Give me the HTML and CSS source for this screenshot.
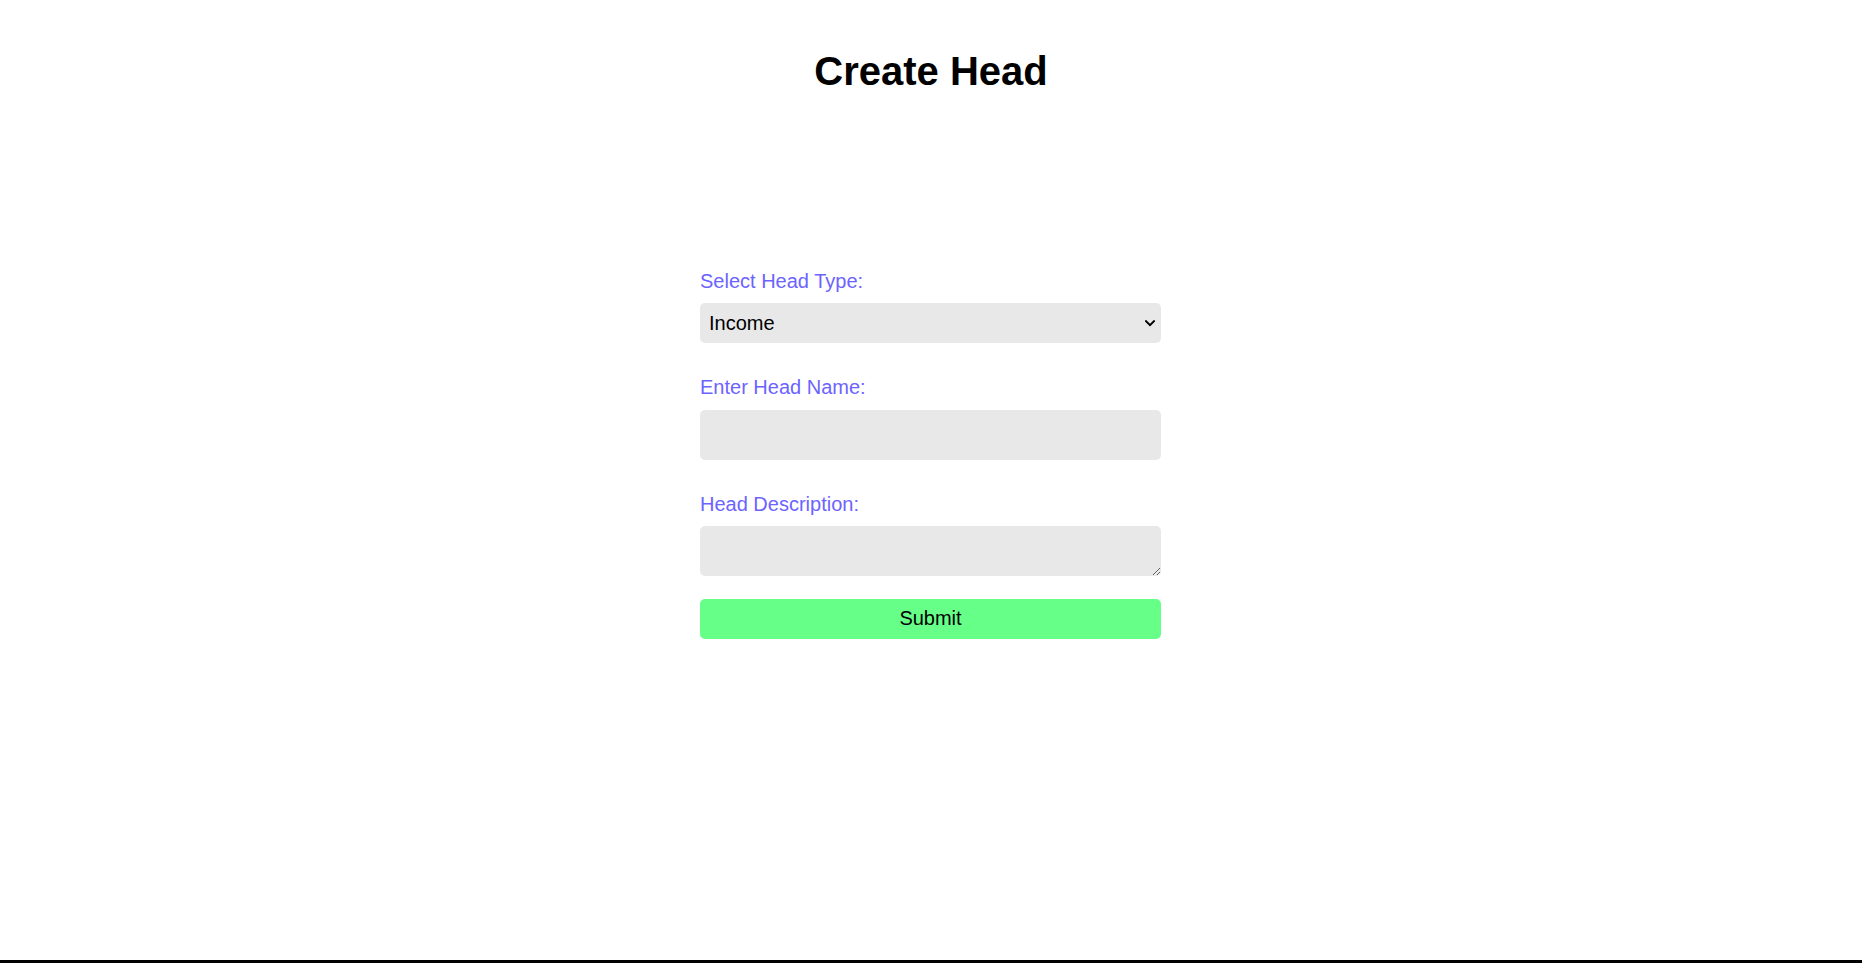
FILE: index.html
```html
<!DOCTYPE html>
<html lang="en">
<head>
<meta charset="utf-8">
<title>Create Head</title>
<link rel="stylesheet" href="styles.css">
</head>
<body>
<main class="page">
  <h1 class="title">Create Head</h1>
  <form class="head-form">
    <div class="field">
      <label class="field-label" for="type">Select Head Type:</label>
      <div class="select-wrap">
        <select id="type" class="control control-select">
          <option>Income</option>
          <option>Expense</option>
        </select>
        <svg class="chevron" width="10" height="7" viewBox="0 0 10 7" aria-hidden="true">
          <path d="M1 1.2 L5 5.2 L9 1.2" fill="none" stroke="#000" stroke-width="2" stroke-linecap="square"/>
        </svg>
      </div>
    </div>
    <div class="field">
      <label class="field-label" for="name">Enter Head Name:</label>
      <input id="name" class="control control-input" type="text">
    </div>
    <div class="field field-last">
      <label class="field-label" for="desc">Head Description:</label>
      <textarea id="desc" class="control control-area"></textarea>
    </div>
    <button type="button" class="submit">Submit</button>
  </form>
</main>
<footer class="footer"></footer>
</body>
</html>
```
FILE: styles.css
```css
* { box-sizing: border-box; }
html, body { margin: 0; padding: 0; }
body {
  min-height: 100vh;
  display: flex;
  flex-direction: column;
  background: #ffffff;
  font-family: "Liberation Sans", Arial, sans-serif;
  color: #000;
}
.page {
  flex: 1;
  display: flex;
  flex-direction: column;
  align-items: center;
}
.title {
  margin: 48px 0 0;
  font-size: 40px;
  font-weight: bold;
  line-height: 46px;
}
.head-form {
  width: 461px;
  margin-top: 175.5px;
  margin-left: -1px;
  display: flex;
  flex-direction: column;
}
.field {
  display: flex;
  flex-direction: column;
  margin-bottom: 33px;
}
.field-last { margin-bottom: 22.5px; }
.field-label {
  font-size: 20px;
  line-height: 23px;
  color: #6c63ff;
  margin-bottom: 10.5px;
}
.control {
  width: 100%;
  border: none;
  border-radius: 5px;
  background: #e8e8e8;
  font-family: "Liberation Sans", Arial, sans-serif;
  font-size: 20px;
  color: #000;
  outline: none;
}
.select-wrap {
  position: relative;
}
.control-select {
  display: block;
  height: 40px;
  padding: 0 24px 0 9px;
  appearance: none;
  -webkit-appearance: none;
}
.chevron {
  position: absolute;
  right: 6px;
  top: 17px;
  pointer-events: none;
}
.control-input {
  display: block;
  height: 50px;
  padding: 0 10px;
}
.control-area {
  height: 50px;
  padding: 8px 10px;
  display: block;
}
.submit {
  height: 40px;
  width: 100%;
  border: none;
  border-radius: 5px;
  background: #66ff88;
  font-family: "Liberation Sans", Arial, sans-serif;
  font-size: 20px;
  color: #000;
}
.footer {
  height: 3px;
  background: #000;
}
```
